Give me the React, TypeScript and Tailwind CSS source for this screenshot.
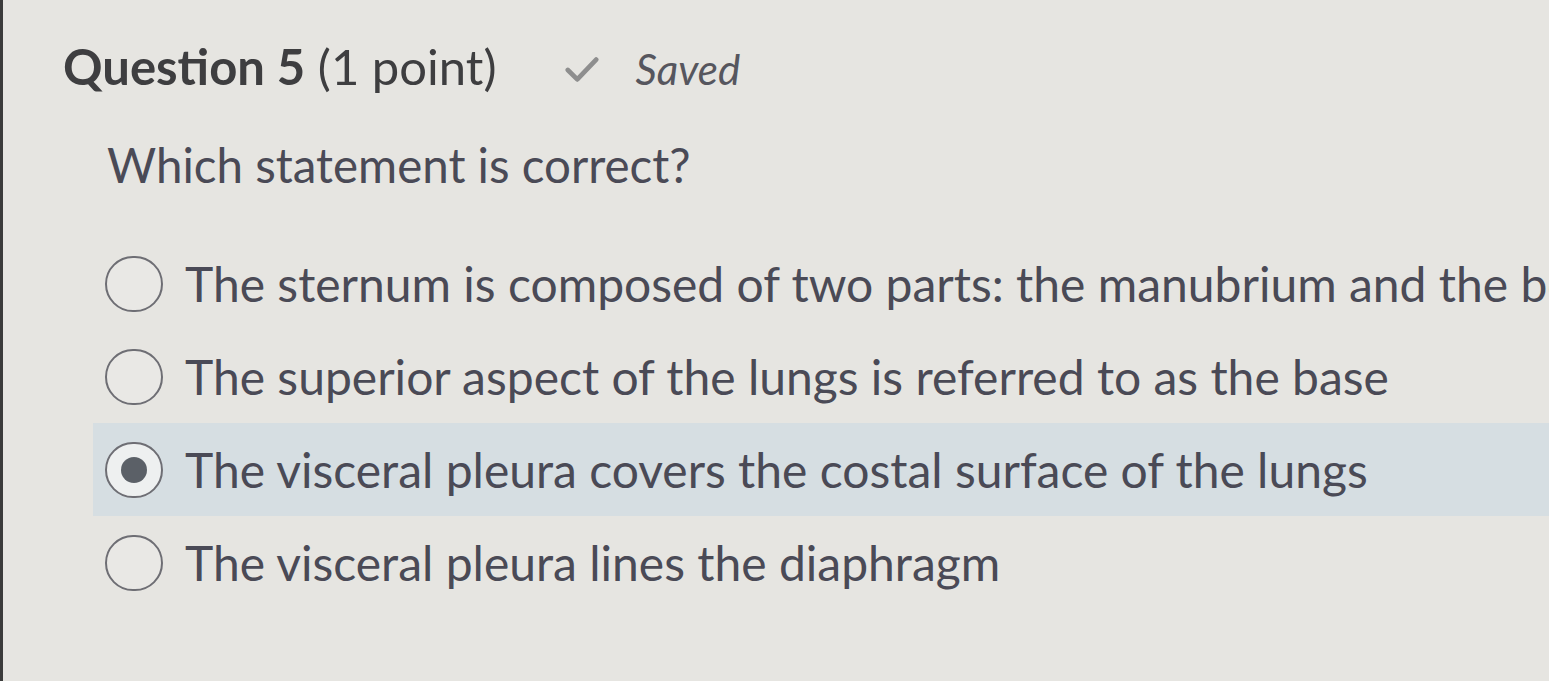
import React from 'react';

const options = [
  'The sternum is composed of two parts: the manubrium and the body',
  'The superior aspect of the lungs is referred to as the base',
  'The visceral pleura covers the costal surface of the lungs',
  'The visceral pleura lines the diaphragm',
];

function Radio({ checked }: { checked: boolean }) {
  return (
    <div
      className={`shrink-0 w-[58px] h-[56px] rounded-full border-2 border-[#6e6e74] flex items-center justify-center ${
        checked ? 'bg-[#eef0f0]' : 'bg-[#e9e8e5]'
      }`}
    >
      {checked && <div className="w-[26px] h-[26px] rounded-full bg-[#5b6067]" />}
    </div>
  );
}

export default function App() {
  const selected = 2;
  return (
    <div
      className="w-[1549px] h-[681px] overflow-hidden bg-[#e6e5e1] border-l-[3px] border-[#3b3b3b] text-[#4a4a56]"
      style={{ fontFamily: 'Lato, "Open Sans", sans-serif' }}
    >
      {/* Header */}
      <div className="flex items-baseline pl-[60px] pt-[32px]">
        <h2 className="text-[49px] leading-[68px] text-[#3e3e40]">
          <span className="font-bold">Question 5</span> (1 point)
        </h2>
        <svg className="ml-[68px] w-[34px] h-[30px] self-center mt-[6px]" viewBox="0 0 36 30" fill="none">
          <path d="M3 15 L13 25 L33 4" stroke="#8e8e8e" strokeWidth="5" strokeLinecap="round" strokeLinejoin="round" />
        </svg>
        <span className="ml-[37px] text-[42px] italic text-[#56565e]">Saved</span>
      </div>

      {/* Question */}
      <p className="pl-[104px] mt-[34px] text-[47.5px] leading-[60px]">Which statement is correct?</p>

      {/* Options */}
      <div className="mt-[42px] pl-[90px] flex flex-col">
        {options.map((opt, i) => (
          <div
            key={i}
            className={`flex items-center gap-[22px] h-[93px] pl-[12px] ${i === selected ? 'bg-[#d6dee2]' : ''}`}
          >
            <Radio checked={i === selected} />
            <span className="text-[48px] whitespace-nowrap">{opt}</span>
          </div>
        ))}
      </div>
    </div>
  );
}
